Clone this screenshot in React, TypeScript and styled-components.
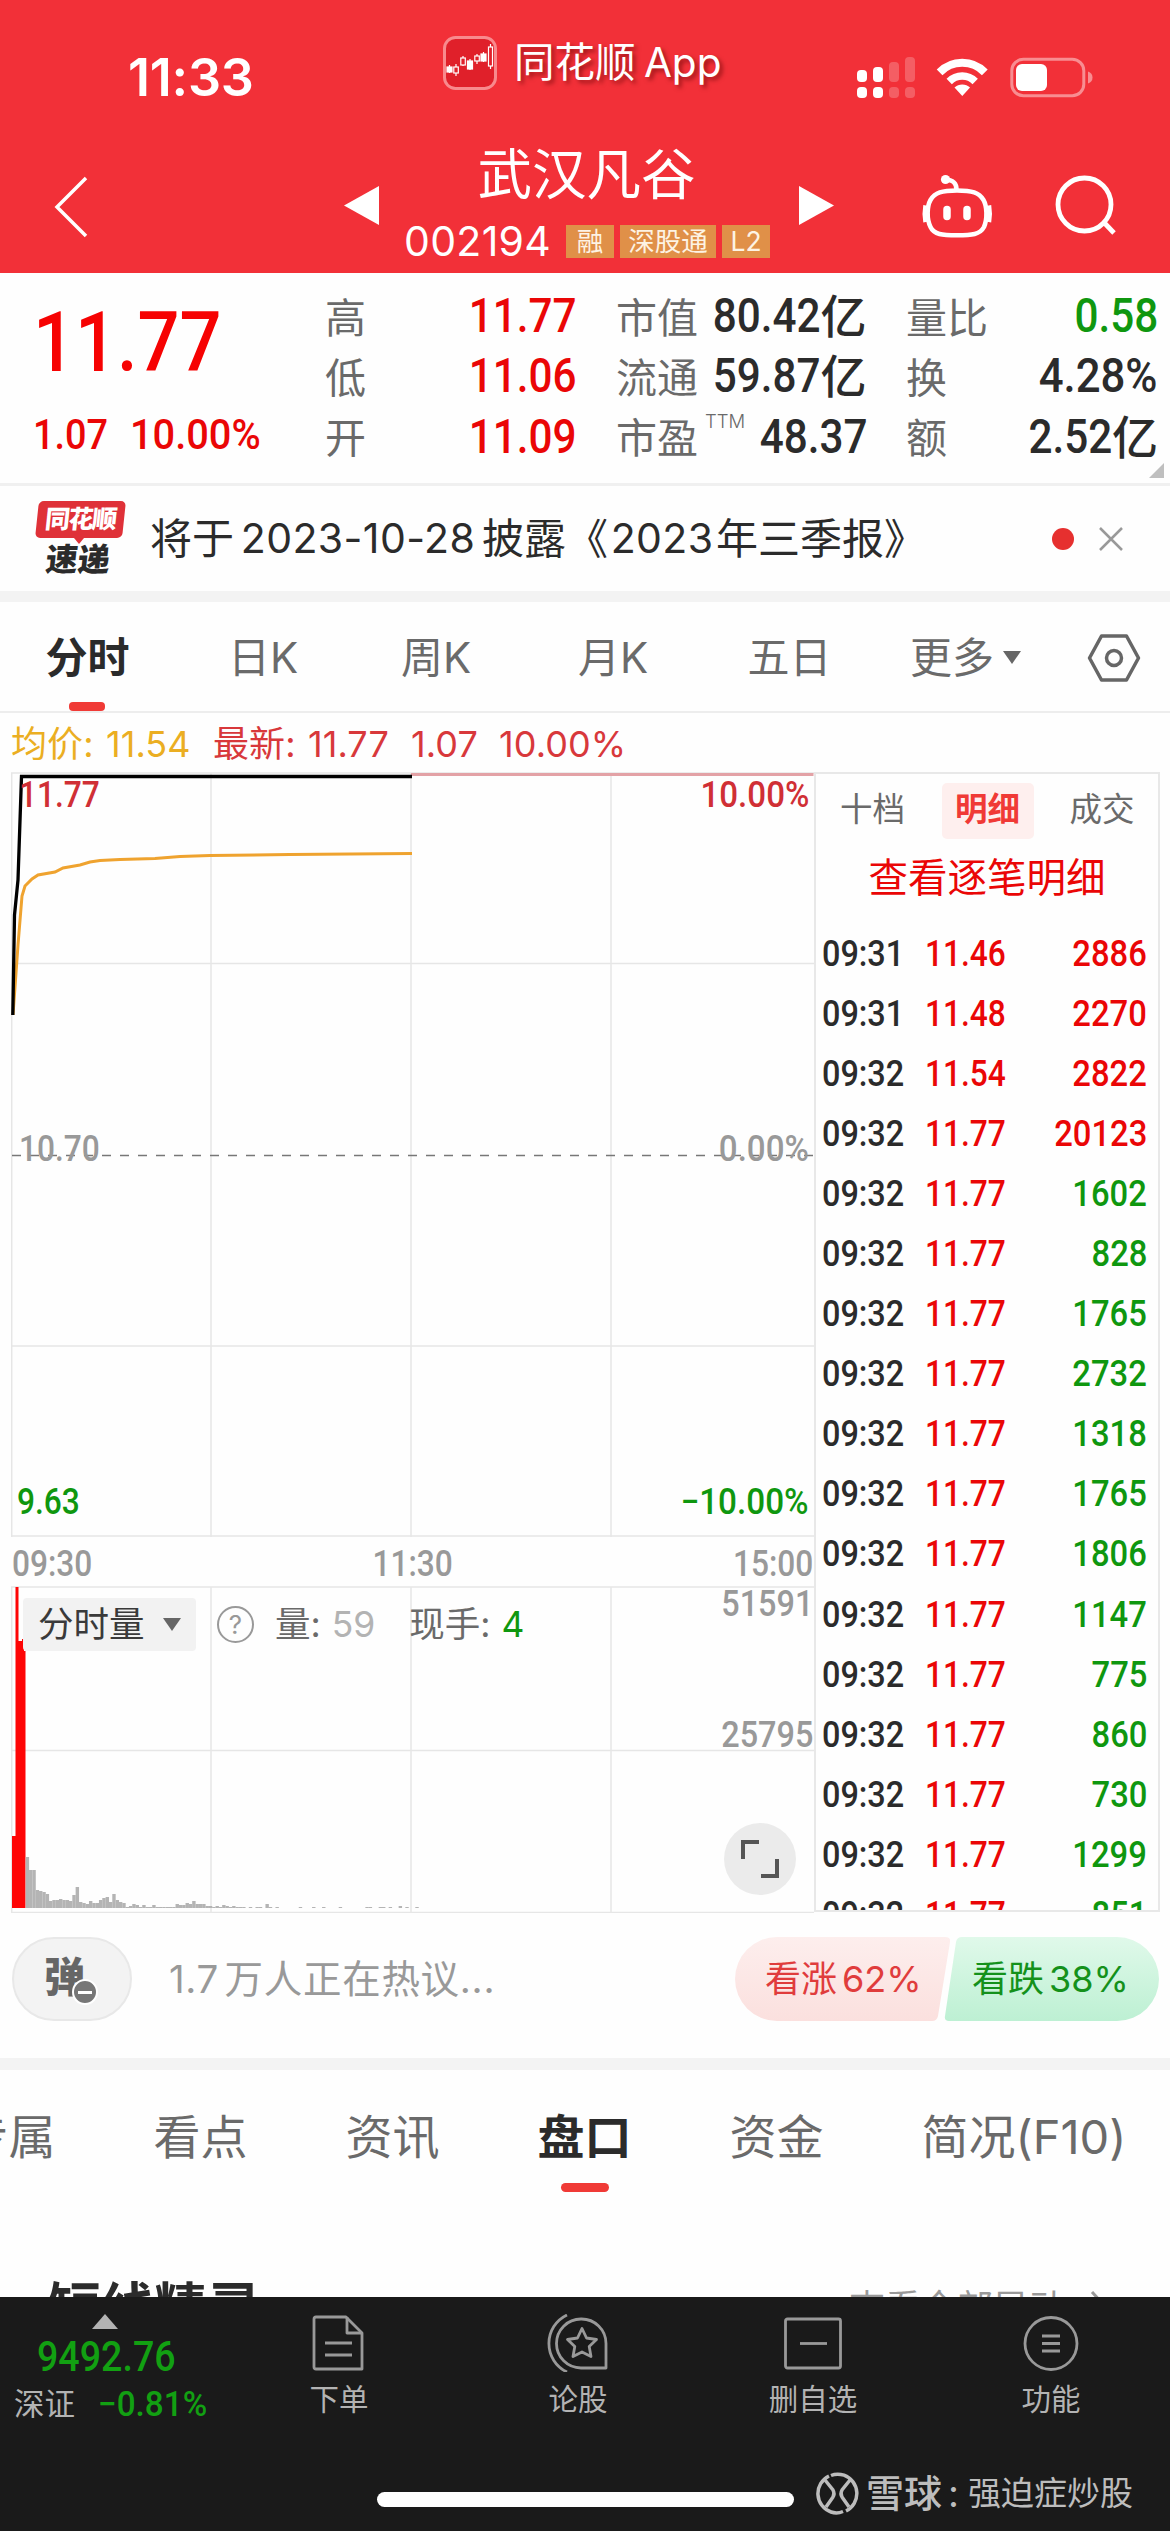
import React from "react";
import styled, { createGlobalStyle, css } from "styled-components";

const sans = `Inter, "Noto Sans CJK SC", sans-serif`;
const din = `Roboto, "Noto Sans CJK SC", sans-serif`;

const color = {
  header: "#f23038",
  rise: "#ea0606",
  fall: "#0f970f",
  ink: "#2b2b2b",
  label: "#6a6a6a",
  axis: "#999",
  grid: "#e6e6e6",
  accent: "#f03a36",
  bar: "#1a1a1a",
};

const GlobalStyle = createGlobalStyle`
  * { box-sizing: border-box; }
  html, body { margin: 0; padding: 0; background: #fefefe; }
  svg { display: block; flex: none; }
`;

const Page = styled.div`
  width: 1170px;
  height: 2532px;
  overflow: hidden;
  display: flex;
  flex-direction: column;
  background: #fefefe;
  font-family: ${sans};
  color: ${color.ink};
  white-space: nowrap;
  line-height: 1;
`;

/* Condensed figures used for all prices */
const Figure = styled.span<{ $size: number; $color?: string; $weight?: number; $squeeze?: number; $from?: string }>`
  display: inline-block;
  font-family: ${din};
  font-size: ${(p) => p.$size}px;
  font-weight: ${(p) => p.$weight ?? 500};
  color: ${(p) => p.$color ?? color.ink};
  transform: scaleX(${(p) => p.$squeeze ?? 0.88});
  transform-origin: ${(p) => p.$from ?? "left"} center;
`;

/* ---------- header ---------- */
const Header = styled.header`
  flex: none;
  height: 273px;
  background: ${color.header};
  color: #fff;
`;

const StatusBar = styled.div`
  height: 126px;
  display: grid;
  grid-template-columns: 443px 411px 1fr;
  align-items: start;
`;

const Clock = styled.div`
  padding: 52px 0 0 128px;
  font-size: 52px;
  font-weight: 600;
  letter-spacing: -0.2px;
`;

const AppBadge = styled.div`
  padding-top: 36px;
  display: flex;
  align-items: center;
  gap: 17px;
  font-size: 40.5px;
  font-weight: 400;
  letter-spacing: 0;
  word-spacing: -3px;
  text-shadow: 3px 3px 4px rgba(90, 0, 0, 0.55);
`;

const StatusIcons = styled.div`
  padding-top: 54px;
  display: flex;
`;

const TitleBar = styled.div`
  height: 147px;
  display: grid;
  grid-template-columns: 340px 42px 413px 42px 84px 72px 62px 1fr;
  align-items: center;
`;

const BackSlot = styled.div`
  padding: 14px 0 0 54px;
`;

const ArrowSlot = styled.div`
  padding-top: 11px;
  justify-self: center;
`;

const IconSlot = styled.div<{ $col: number }>`
  padding-top: 12px;
  grid-column: ${(p) => p.$col};
`;

const TitleStack = styled.div`
  height: 147px;
  padding: 19px 4px 0 0;
  display: flex;
  flex-direction: column;
  align-items: center;
`;

const StockName = styled.div`
  font-size: 54.5px;
  font-weight: 400;
  line-height: 58px;
`;

const CodeRow = styled.div`
  width: 100%;
  padding-left: 22px;
  margin-top: 18px;
  height: 40px;
  display: flex;
  align-items: center;
  gap: 6px;
`;

const Code = styled.span`
  width: 156px;
  font-size: 41px;
  font-weight: 400;
  letter-spacing: 0.3px;
`;

const Tag = styled.span<{ $w: number }>`
  width: ${(p) => p.$w}px;
  height: 33px;
  display: grid;
  place-items: center;
  background: #e09048;
  color: #fdf3e4;
  font-size: 26.5px;
`;

/* ---------- quote ---------- */
const Quote = styled.section`
  flex: none;
  height: 213px;
  padding-top: 13px;
  border-bottom: 3px solid #f0f0f0;
  display: grid;
  grid-template-columns: 325px 251px 40px 250px 40px 252px 12px;
  position: relative;
`;

const PriceBlock = styled.div`
  padding-left: 33px;
`;

const PriceMain = styled.div`
  height: 114px;
  display: flex;
  align-items: center;
`;

const PriceChange = styled.div`
  height: 68px;
  display: grid;
  grid-template-columns: 97px 1fr;
  align-items: center;
`;

const StatColumn = styled.div<{ $col: number }>`
  grid-column: ${(p) => p.$col};
`;

const Stat = styled.div`
  height: 60.3px;
  display: flex;
  align-items: center;
`;

const StatLabel = styled.span`
  padding-top: 4px;
  font-size: 41px;
  color: ${color.label};
  font-weight: 400;
`;

const StatSup = styled.sup`
  align-self: flex-start;
  margin: 5px 0 0 7px;
  font-size: 18.5px;
  color: ${color.label};
  font-weight: 300;
`;

const StatValue = styled.span`
  margin-left: auto;
  display: flex;
  align-items: center;
`;

const Unit = styled.span`
  font-size: 46px;
  font-weight: 500;
  font-family: ${sans};
`;

const FoldCorner = styled.i`
  position: absolute;
  right: 6px;
  bottom: 5px;
  border-style: solid;
  border-width: 0 0 15px 15px;
  border-color: transparent transparent #bfbfbf transparent;
`;

/* ---------- news ---------- */
const News = styled.section`
  flex: none;
  height: 105px;
  display: flex;
  align-items: center;
`;

const NewsLogo = styled.div`
  flex: none;
  width: 150px;
  padding-left: 37px;
  display: flex;
  flex-direction: column;
`;

const LogoTop = styled.span`
  width: 87px;
  height: 37px;
  display: grid;
  place-items: center;
  border-radius: 5px;
  background: #df3138;
  color: #fff;
  transform: skewX(-6deg);
  font-size: 25px;
  font-weight: 900;
  letter-spacing: -1.5px;
`;

const LogoTail = styled.i`
  margin-left: 37px;
  border-style: solid;
  border-width: 6px 5px 0 5px;
  border-color: #df3138 transparent transparent;
  width: 0;
`;

const LogoBottom = styled.span`
  padding-left: 9px;
  font-size: 32px;
  line-height: 32px;
  font-weight: 900;
  transform: skewX(-6deg);
`;

const NewsText = styled.div`
  flex: none;
  width: 865px;
  display: flex;
  align-items: center;
  font-size: 42px;
`;

const NewsNumber = styled.span<{ $w: number }>`
  width: ${(p) => p.$w}px;
  text-align: center;
  font-size: 41px;
  letter-spacing: 0.4px;
`;

const RedDot = styled.i`
  margin: 0 25px 0 37px;
  width: 22px;
  height: 22px;
  border-radius: 50%;
  background: #e6302f;
`;

const Band = styled.div<{ $h: number }>`
  flex: none;
  height: ${(p) => p.$h}px;
  background: #f3f3f3;
`;

/* ---------- period tabs ---------- */
const PeriodTabs = styled.nav`
  flex: none;
  height: 111px;
  border-bottom: 2px solid #ededed;
  display: grid;
  grid-template-columns: 175px 176px 170px 184px 169px 183px 1fr;
`;

const PeriodTab = styled.div<{ $active?: boolean }>`
  display: flex;
  align-items: center;
  justify-content: center;
  padding-top: 2px;
  gap: 9px;
  font-size: 42px;
  color: ${(p) => (p.$active ? color.ink : color.label)};
  font-weight: ${(p) => (p.$active ? 700 : 400)};
  position: relative;
  ${(p) =>
    p.$active &&
    css`
      &::after {
        content: "";
        position: absolute;
        left: 69px;
        bottom: 0;
        width: 36px;
        height: 9px;
        border-radius: 4px;
        background: ${color.accent};
      }
    `}
`;

const Legend = styled.div`
  flex: none;
  height: 59px;
  padding: 2px 0 0 11px;
  display: grid;
  grid-template-columns: 202px 198px 88px 1fr;
  align-items: center;
  font-size: 36px;
  letter-spacing: 0.1px;
  word-spacing: 2px;
  color: #d8383b;
`;

const Average = styled.span`
  color: #ebae22;
`;

/* ---------- charts ---------- */
const Workspace = styled.div`
  flex: none;
  height: 1140px;
  padding-left: 11px;
  display: flex;
`;

const ChartColumn = styled.div`
  width: 803px;
  display: flex;
  flex-direction: column;
`;

const PlotArea = styled.div<{ $h: number }>`
  position: relative;
  height: ${(p) => p.$h}px;
`;

const AxisLabel = styled.span<{ $top: number; $side: "left" | "right"; $inset: number }>`
  position: absolute;
  top: ${(p) => p.$top}px;
  ${(p) => p.$side}: ${(p) => p.$inset}px;
`;

const TimeAxis = styled.div`
  height: 49px;
  padding: 4px 1px 0 1px;
  display: grid;
  grid-template-columns: 1fr 1fr 1fr;
  align-items: center;
  & > :nth-child(2) { justify-self: center; }
  & > :nth-child(3) { justify-self: end; }
`;

const VolumeTools = styled.div`
  position: absolute;
  left: 12px;
  top: 12px;
  height: 53px;
  display: flex;
  align-items: center;
  font-size: 35.5px;
  color: ${color.label};
`;

const VolumePicker = styled.div`
  width: 173px;
  height: 53px;
  padding-left: 15px;
  border-radius: 4px;
  background: #f2f2f2;
  display: flex;
  align-items: center;
  gap: 18px;
  color: #3a3a3a;
`;

const HelpIcon = styled.span`
  margin: 0 21px 0 21px;
  width: 37px;
  height: 37px;
  border: 2.5px solid #999;
  border-radius: 50%;
  display: grid;
  place-items: center;
  font-size: 26px;
  color: #999;
`;

const ToolValue = styled.span<{ $color: string; $gap: number }>`
  margin: 0 ${(p) => p.$gap}px 0 11px;
  color: ${(p) => p.$color};
`;

const ExpandButton = styled.div`
  position: absolute;
  left: 713px;
  top: 237px;
  width: 72px;
  height: 72px;
  border-radius: 50%;
  background: #ebebeb;
  display: grid;
  place-items: center;
`;

/* ---------- tick panel ---------- */
const TickPanel = styled.aside`
  width: 346px;
  height: 1140px;
  overflow: hidden;
  border: 2px solid #e8e8e8;
`;

const TickTabs = styled.div`
  height: 73px;
  padding-left: 10px;
  display: grid;
  grid-template-columns: 93px 137px 92px;
  align-items: center;
  justify-items: center;
`;

const TickTab = styled.span<{ $active?: boolean }>`
  width: 92px;
  height: 56px;
  display: grid;
  place-items: center;
  border-radius: 5px;
  font-size: 32.5px;
  color: ${(p) => (p.$active ? color.accent : color.label)};
  font-weight: ${(p) => (p.$active ? 700 : 400)};
  background: ${(p) => (p.$active ? "#feefee" : "transparent")};
`;

const TickLink = styled.div`
  height: 77px;
  padding-top: 12px;
  text-align: center;
  font-size: 39.5px;
  color: ${color.rise};
`;

const TickRow = styled.div`
  height: 60.05px;
  padding: 0 11px 0 6px;
  display: grid;
  grid-template-columns: 103px 100px 1fr;
  align-items: center;
  & > :last-child { justify-self: end; }
`;

/* ---------- discussion ---------- */
const Discussion = styled.section`
  flex: none;
  height: 146px;
  padding: 25px 11px 0 12px;
  display: flex;
  align-items: flex-start;
`;

const BulletButton = styled.div`
  width: 120px;
  height: 84px;
  padding: 0 0 3px 30px;
  border: 2px solid #e8e8e8;
  border-radius: 42px;
  background: #f3f3f3;
  display: flex;
  align-items: center;
  font-size: 41px;
  font-weight: 900;
  color: #666;
  position: relative;
`;

const MinusBadge = styled.i`
  position: absolute;
  left: 58px;
  top: 40px;
  width: 26px;
  height: 26px;
  border: 2px solid #fff;
  border-radius: 50%;
  background: #777;
  display: grid;
  place-items: center;
  &::after {
    content: "";
    width: 14px;
    height: 3px;
    background: #fff;
  }
`;

const HotText = styled.div`
  flex: 1;
  padding-left: 37px;
  line-height: 84px;
  font-size: 38.5px;
  letter-spacing: 0.7px;
  word-spacing: -6px;
  color: #999;
`;

const Vote = styled.div<{ $up?: boolean }>`
  height: 84px;
  display: flex;
  align-items: center;
  font-size: 36px;
  gap: 5px;
  ${(p) =>
    p.$up
      ? css`
          width: 215px;
          padding-left: 30px;
          color: #e03c3c;
          background: linear-gradient(#fdeeed, #fbe0de);
          clip-path: path("M42 0H210Q216 0 215 5L203 79Q202 84 197 84H42A42 42 0 0 1 42 0Z");
        `
      : css`
          width: 215px;
          margin-left: -6px;
          padding-left: 28px;
          color: #14911b;
          background: linear-gradient(#e0f9ea, #bdf0d3);
          clip-path: path("M18 0H173A42 42 0 0 1 173 84H5Q0 84 1 79L12 5Q13 0 18 0Z");
        `}
`;

/* ---------- section tabs ---------- */
const SectionTabs = styled.nav`
  flex: none;
  height: 160px;
  display: flex;
  gap: 98px;
  margin-left: -38.5px;
  padding-top: 41px;
`;

const SectionTab = styled.div<{ $active?: boolean }>`
  display: flex;
  flex-direction: column;
  align-items: center;
  font-size: 47px;
  line-height: 52px;
  color: ${(p) => (p.$active ? color.ink : color.label)};
  font-weight: ${(p) => (p.$active ? 700 : 400)};
  &::after {
    content: "";
    margin-top: 20px;
    width: 48px;
    height: 9px;
    border-radius: 5px;
    background: ${(p) => (p.$active ? color.accent : "transparent")};
  }
`;

const SectionHead = styled.div`
  flex: none;
  height: 67px;
  padding: 52px 64px 0 48px;
  overflow: hidden;
  display: flex;
  justify-content: space-between;
`;

const SectionTitle = styled.span`
  font-size: 53px;
  font-weight: 700;
`;

const SectionMore = styled.span`
  padding-top: 8px;
  display: flex;
  gap: 25px;
  font-size: 36px;
  color: ${color.axis};
`;

/* ---------- bottom bar ---------- */
const BottomBar = styled.footer`
  flex: none;
  height: 234px;
  background: ${color.bar};
  color: #b3b3b3;
`;

const Actions = styled.div`
  height: 150px;
  display: grid;
  grid-template-columns: 216px 246px 232px 238px 1fr;
`;

const IndexBlock = styled.div`
  padding: 16px 0 0 14px;
  display: flex;
  flex-direction: column;
`;

const IndexRow = styled.div<{ $h: number; $indent?: number }>`
  height: ${(p) => p.$h}px;
  padding-left: ${(p) => p.$indent ?? 0}px;
  display: flex;
  align-items: center;
  gap: 23px;
  font-size: 30.5px;
`;

const Action = styled.div`
  padding-top: 17px;
  display: flex;
  flex-direction: column;
  align-items: center;
  gap: 10px;
  font-size: 29.5px;
  line-height: 34px;
`;

const HomeRow = styled.div`
  height: 84px;
  padding-left: 377px;
  display: flex;
`;

const HomeIndicator = styled.div`
  margin: 45px 22px 0 0;
  width: 417px;
  height: 15px;
  border-radius: 8px;
  background: #fff;
`;

const Watermark = styled.div`
  padding-top: 24px;
  height: 68px;
  display: flex;
  align-items: center;
  font-size: 38px;
  color: #bdbdbd;
`;

const Author = styled.span`
  margin-left: 9px;
  font-size: 33px;
`;

const Brand = styled.span`
  margin: 0 6px 0 7px;
  font-weight: 500;
`;

/* ---------- data ---------- */
const ticks: [string, string, string, boolean][] = [
  ["09:31", "11.46", "2886", true],
  ["09:31", "11.48", "2270", true],
  ["09:32", "11.54", "2822", true],
  ["09:32", "11.77", "20123", true],
  ["09:32", "11.77", "1602", false],
  ["09:32", "11.77", "828", false],
  ["09:32", "11.77", "1765", false],
  ["09:32", "11.77", "2732", false],
  ["09:32", "11.77", "1318", false],
  ["09:32", "11.77", "1765", false],
  ["09:32", "11.77", "1806", false],
  ["09:32", "11.77", "1147", false],
  ["09:32", "11.77", "775", false],
  ["09:32", "11.77", "860", false],
  ["09:32", "11.77", "730", false],
  ["09:32", "11.77", "1299", false],
  ["09:32", "11.77", "851", false],
];

const volumeTail = [
  51, 38, 38, 18, 17, 16, 14, 7, 8, 8, 9, 8, 8, 7, 13, 21, 6, 5, 4, 7, 5, 5, 8, 10, 11, 6, 14, 8, 6, 5,
  1, 2, 4, 3, 1, 3, 1, 1, 3, 1, 1, 1, 1, 1, 1, 4, 3, 3, 5, 4, 7, 4, 4, 4, 2, 2, 1, 2, 1, 3, 2, 1, 2, 1, 1,
  1, 0, 1, 0, 1, 1, 0, 4, 1, 0, 1, 0, 0, 0, 0, 0, 0, 1, 0, 0, 0, 1, 0, 0, 1, 0, 0, 0, 0, 1, 0, 0, 0, 0, 0,
  0, 0, 1, 1, 0, 0, 1, 1, 0, 1, 0, 0, 2, 0, 1, 0, 0, 1,
];

const Triangle = ({ w, h, d, fill }: { w: number; h: number; d: string; fill: string }) => (
  <svg width={w} height={h} viewBox={`0 0 ${w} ${h}`}>
    <path d={d} fill={fill} />
  </svg>
);

const SignalIcon = () => (
  <svg width="242" height="48" viewBox="853 54 242 48" fill="#fff">
    {[70, 67, 62, 57].map((top, i) => (
      <g key={top} opacity={i < 2 ? 1 : 0.22}>
        <rect x={856 + i * 16} y={top} width="10" height={82 - top} rx="4" />
        <rect x={856 + i * 16} y="87" width="10" height="11" rx="4" />
      </g>
    ))}
    <g fill="none" stroke="#fff">
      <path d="M938.6 72.4A31.5 31.5 0 0 1 983.8 72.4" strokeWidth="8" />
      <path d="M948.2 81.5A18.3 18.3 0 0 1 974.2 81.5" strokeWidth="7.5" />
    </g>
    <path d="M961.3 96L953.5 87.6A11 11 0 0 1 969 87.6Z" />
    <rect x="1010.8" y="59.3" width="72" height="36.5" rx="11.5" fill="none" stroke="#fff" strokeWidth="3" opacity=".45" />
    <rect x="1015" y="64" width="31" height="27" rx="6" />
    <path d="M1087 71.5Q1091.5 73 1091.5 77.500T1087 83.500Z" opacity=".45" />
  </svg>
);

const AppIcon = () => (
  <svg width="54" height="54" viewBox="0 0 54 54">
    <rect x="1.500" y="1.500" width="51" height="51" rx="11" fill="#e0202a" stroke="#f88a8d" strokeWidth="3" />
    <g stroke="#fff" strokeWidth="1.200">
      <path d="M6.500 29V37M13 28V40M20 20V30M27 23V34M34 18V28M40.500 16V26M47.500 8V33" />
      <g fill="#fff">
        <rect x="4" y="31" width="5" height="5" />
        <rect x="24.500" y="25" width="5" height="8" />
        <rect x="38" y="18" width="5" height="7" />
      </g>
      <g fill="#e0202a">
        <rect x="10.800" y="31" width="4.500" height="6" />
        <rect x="17.800" y="22" width="4.500" height="7" />
        <rect x="31.800" y="20" width="4.500" height="5" />
        <rect x="45.500" y="11" width="4" height="19" />
      </g>
    </g>
  </svg>
);

const RobotIcon = () => (
  <svg width="72" height="66" viewBox="921 172 72 66" fill="none" stroke="#fff" strokeWidth="4.500">
    <path d="M957 189.500C972 189.500 979 191.500 983.500 199C987 205 987.500 218 984 226C980 233.500 972 234.300 957 234.300S934 233.500 930.500 226C926.500 218 927 205 930.500 199C935 191.500 942 189.500 957 189.500Z" />
    <path d="M945 178.500Q957 179 956.500 189" />
    <circle cx="945.500" cy="178.500" r="4.600" fill="#fff" stroke="none" />
    <path d="M926 204.500Q924.500 213 926 221M988.500 204.500Q990 213 988.500 221" strokeWidth="5.500" />
    <path d="M947 208.500V215.500M967 208.500V215.500" strokeWidth="7.500" strokeLinecap="round" />
  </svg>
);

const SearchIcon = () => (
  <svg width="62" height="62" viewBox="1055 175 62 62" fill="none" stroke="#fff" strokeWidth="4.800">
    <circle cx="1084.500" cy="204.500" r="26.500" />
    <path d="M1103.500 222L1114 233" />
  </svg>
);

const PriceChart = () => (
  <svg width="805" height="765" viewBox="11 772 805 765">
    <g stroke={color.grid} strokeWidth="1.500">
      <path d="M11.700 773V1537M211 773V1537M411 773V1537M611 773V1537" />
      <path d="M11 773H814M11 963.500H814M11 1346H814M11 1536H814" />
    </g>
    <path d="M12 1155.500H814" stroke="#777" strokeWidth="1.600" strokeDasharray="9 9" />
    <path d="M411 774.500H813.500" fill="none" stroke="#e3a2a6" strokeWidth="3" />
    <path
      d="M13 1015L18 945L22 896L25 886L32 879L38 875L55 872L63 868L80 865L90 862L100 860.500L120 859.500L155 858.500L180 856.500L210 855.500L290 854.500L412 853.500"
      fill="none"
      stroke="#efa32f"
      strokeWidth="3"
    />
    <path d="M12.800 1015L14.500 915L18 880L21.500 776.500H412" fill="none" stroke="#000" strokeWidth="3.300" />
  </svg>
);

const VolumeChart = () => (
  <svg width="805" height="327" viewBox="11 1585 805 327">
    <g stroke={color.grid} strokeWidth="1.500">
      <path d="M11.700 1586V1912M211 1586V1912M411 1586V1912M611 1586V1912" />
      <path d="M11 1586H814M11 1749.500H814M11 1911.500H814" />
    </g>
    <path d="M12 1907V1835H15.500V1586H18.500V1640H22V1638H24V1650H25.500V1907Z" fill="#fe0505" />
    {volumeTail.map((h, i) => (
      <rect key={i} x={25.7 + i * 3.33} y={1907 - h} width="3.400" height={h} fill="#b4b4b4" />
    ))}
  </svg>
);

export default function App() {
  return (
    <Page>
      <GlobalStyle />
      <Header>
        <StatusBar>
          <Clock>11:33</Clock>
          <AppBadge>
            <AppIcon />
            同花顺 App
          </AppBadge>
          <StatusIcons>
            <SignalIcon />
          </StatusIcons>
        </StatusBar>
        <TitleBar>
          <BackSlot>
            <svg width="34" height="62" viewBox="0 0 34 62" fill="none" stroke="#fff" strokeWidth="3.500">
              <path d="M32 2L3 31L32 60" />
            </svg>
          </BackSlot>
          <ArrowSlot>
            <Triangle w={35} h={39} d="M35 0V39L0 19.500Z" fill="#fff" />
          </ArrowSlot>
          <TitleStack>
            <StockName>武汉凡谷</StockName>
            <CodeRow>
              <Code>002194</Code>
              <Tag $w={48}>融</Tag>
              <Tag $w={96}>深股通</Tag>
              <Tag $w={48}>L2</Tag>
            </CodeRow>
          </TitleStack>
          <ArrowSlot>
            <Triangle w={35} h={39} d="M0 0V39L35 19.500Z" fill="#fff" />
          </ArrowSlot>
          <IconSlot $col={6}>
            <RobotIcon />
          </IconSlot>
          <IconSlot $col={8}>
            <SearchIcon />
          </IconSlot>
        </TitleBar>
      </Header>

      <Quote>
        <PriceBlock>
          <PriceMain>
            <Figure $size={84} $color="#f60202" $squeeze={0.88}>11.77</Figure>
          </PriceMain>
          <PriceChange>
            <Figure $size={43} $color={color.rise}>1.07</Figure>
            <Figure $size={43} $color={color.rise} $squeeze={0.925}>10.00%</Figure>
          </PriceChange>
        </PriceBlock>
        <StatColumn $col={2}>
          {[["高", "11.77"], ["低", "11.06"], ["开", "11.09"]].map(([k, v]) => (
            <Stat key={k}>
              <StatLabel>{k}</StatLabel>
              <StatValue>
                <Figure $size={48} $color={color.rise} $from="right">{v}</Figure>
              </StatValue>
            </Stat>
          ))}
        </StatColumn>
        <StatColumn $col={4}>
          <Stat>
            <StatLabel>市值</StatLabel>
            <StatValue>
              <Figure $size={48} $from="right">80.42</Figure>
              <Unit>亿</Unit>
            </StatValue>
          </Stat>
          <Stat>
            <StatLabel>流通</StatLabel>
            <StatValue>
              <Figure $size={48} $from="right">59.87</Figure>
              <Unit>亿</Unit>
            </StatValue>
          </Stat>
          <Stat>
            <StatLabel>市盈</StatLabel>
            <StatSup>TTM</StatSup>
            <StatValue>
              <Figure $size={48} $from="right">48.37</Figure>
            </StatValue>
          </Stat>
        </StatColumn>
        <StatColumn $col={6}>
          <Stat>
            <StatLabel>量比</StatLabel>
            <StatValue>
              <Figure $size={48} $from="right" $color={color.fall}>0.58</Figure>
            </StatValue>
          </Stat>
          <Stat>
            <StatLabel>换</StatLabel>
            <StatValue>
              <Figure $size={48} $from="right" $squeeze={0.91}>4.28%</Figure>
            </StatValue>
          </Stat>
          <Stat>
            <StatLabel>额</StatLabel>
            <StatValue>
              <Figure $size={48} $from="right">2.52</Figure>
              <Unit>亿</Unit>
            </StatValue>
          </Stat>
        </StatColumn>
        <FoldCorner />
      </Quote>

      <News>
        <NewsLogo>
          <LogoTop>同花顺</LogoTop>
          <LogoTail />
          <LogoBottom>速递</LogoBottom>
        </NewsLogo>
        <NewsText>
          将于
          <NewsNumber $w={248}>2023-10-28</NewsNumber>
          披露《
          <NewsNumber $w={108}>2023</NewsNumber>
          年三季报》
        </NewsText>
        <RedDot />
        <svg width="24" height="24" viewBox="0 0 24 24" stroke="#999" strokeWidth="2.500">
          <path d="M1 1L23 23M23 1L1 23" />
        </svg>
      </News>
      <Band $h={11} />

      <PeriodTabs>
        <PeriodTab $active>分时</PeriodTab>
        <PeriodTab>日K</PeriodTab>
        <PeriodTab>周K</PeriodTab>
        <PeriodTab>月K</PeriodTab>
        <PeriodTab>五日</PeriodTab>
        <PeriodTab>
          更多
          <Triangle w={18} h={13} d="M0 0H18L9 13Z" fill="#666" />
        </PeriodTab>
        <PeriodTab>
          <svg width="54" height="48" viewBox="0 0 54 48" fill="none" stroke="#666" strokeWidth="3.500">
            <path d="M14.500 2H39.500L51.500 24L39.500 46H14.500L2.500 24Z" strokeLinejoin="round" />
            <circle cx="27" cy="24" r="7.500" />
          </svg>
        </PeriodTab>
      </PeriodTabs>

      <Legend>
        <Average>均价: 11.54</Average>
        <span>最新: 11.77</span>
        <span>1.07</span>
        <span>10.00%</span>
      </Legend>

      <Workspace>
        <ChartColumn>
          <PlotArea $h={765}>
            <PriceChart />
            <AxisLabel $side="left" $inset={8} $top={5}>
              <Figure $size={36} $color="#d02f35">11.77</Figure>
            </AxisLabel>
            <AxisLabel $side="right" $inset={5} $top={5}>
              <Figure $size={36} $color="#d02f35" $from="right" $squeeze={0.92}>10.00%</Figure>
            </AxisLabel>
            <AxisLabel $side="left" $inset={8} $top={359}>
              <Figure $size={36} $color={color.axis}>10.70</Figure>
            </AxisLabel>
            <AxisLabel $side="right" $inset={5} $top={359}>
              <Figure $size={36} $color={color.axis} $from="right" $squeeze={0.92}>0.00%</Figure>
            </AxisLabel>
            <AxisLabel $side="left" $inset={6} $top={712}>
              <Figure $size={36} $color={color.fall}>9.63</Figure>
            </AxisLabel>
            <AxisLabel $side="right" $inset={5} $top={712}>
              <Figure $size={36} $color={color.fall} $from="right" $squeeze={0.925}>−10.00%</Figure>
            </AxisLabel>
          </PlotArea>
          <TimeAxis>
            <Figure $size={36} $color={color.axis}>09:30</Figure>
            <Figure $size={36} $color={color.axis} $from="center">11:30</Figure>
            <Figure $size={36} $color={color.axis} $from="right">15:00</Figure>
          </TimeAxis>
          <PlotArea $h={326}>
            <VolumeChart />
            <AxisLabel $side="right" $inset={1} $top={0}>
              <Figure $size={36} $color={color.axis} $from="right" $squeeze={0.9}>51591</Figure>
            </AxisLabel>
            <AxisLabel $side="right" $inset={1} $top={131}>
              <Figure $size={36} $color={color.axis} $from="right" $squeeze={0.9}>25795</Figure>
            </AxisLabel>
            <VolumeTools>
              <VolumePicker>
                分时量
                <Triangle w={18} h={13} d="M0 0H18L9 13Z" fill="#666" />
              </VolumePicker>
              <HelpIcon>?</HelpIcon>
              量:
              <ToolValue $color="#b3b3b3" $gap={34}>59</ToolValue>
              现手:
              <ToolValue $color="#0f970f" $gap={0}>4</ToolValue>
            </VolumeTools>
            <ExpandButton>
              <svg width="38" height="38" viewBox="0 0 38 38" fill="none" stroke="#555" strokeWidth="4">
                <path d="M2 19V2H18M36 19V36H20" />
              </svg>
            </ExpandButton>
          </PlotArea>
        </ChartColumn>
        <TickPanel>
          <TickTabs>
            <TickTab>十档</TickTab>
            <TickTab $active>明细</TickTab>
            <TickTab>成交</TickTab>
          </TickTabs>
          <TickLink>查看逐笔明细</TickLink>
          {ticks.map(([time, price, vol, up], i) => (
            <TickRow key={i}>
              <Figure $size={36} $squeeze={0.9}>{time}</Figure>
              <Figure $size={36} $color={color.rise} $squeeze={0.88}>{price}</Figure>
              <Figure $size={36} $color={up ? color.rise : color.fall} $from="right" $squeeze={0.91}>{vol}</Figure>
            </TickRow>
          ))}
        </TickPanel>
      </Workspace>

      <Discussion>
        <BulletButton>
          弹
          <MinusBadge />
        </BulletButton>
        <HotText>1.7 万人正在热议...</HotText>
        <Vote $up>
          <span>看涨</span>
          <span>62%</span>
        </Vote>
        <Vote>
          <span>看跌</span>
          <span>38%</span>
        </Vote>
      </Discussion>
      <Band $h={12} />

      <SectionTabs>
        <SectionTab>专属</SectionTab>
        <SectionTab>看点</SectionTab>
        <SectionTab>资讯</SectionTab>
        <SectionTab $active>盘口</SectionTab>
        <SectionTab>资金</SectionTab>
        <SectionTab>简况(F10)</SectionTab>
      </SectionTabs>
      <SectionHead>
        <SectionTitle>短线精灵</SectionTitle>
        <SectionMore>
          查看全部异动
          <svg width="16" height="30" viewBox="0 0 16 30" fill="none" stroke="#999" strokeWidth="3">
            <path d="M2 2L14 15L2 28" />
          </svg>
        </SectionMore>
      </SectionHead>

      <BottomBar>
        <Actions>
          <IndexBlock>
            <IndexRow $h={16} $indent={78}>
              <Triangle w={26} h={15} d="M13 0L26 15H0Z" fill="#b3b3b3" />
            </IndexRow>
            <IndexRow $h={55} $indent={23}>
              <Figure $size={42} $color="#12a012" $squeeze={0.895}>9492.76</Figure>
            </IndexRow>
            <IndexRow $h={41}>
              深证
              <Figure $size={35} $color="#12a012" $squeeze={0.95}>−0.81%</Figure>
            </IndexRow>
          </IndexBlock>
          <Action>
            <svg width="54" height="58" viewBox="0 0 54 58" fill="none" stroke="#999" strokeWidth="2.800" strokeLinejoin="round">
              <path d="M4 3H34L50 19V55H4Q2 55 2 53V5Q2 3 4 3Z" />
              <path d="M35 3V19H50M13 29H40M13 41H40" />
            </svg>
            下单
          </Action>
          <Action>
            <svg width="62" height="58" viewBox="0 0 62 58" fill="none" stroke="#999" strokeWidth="2.800" strokeLinejoin="round">
              <path d="M34 5A24.500 24.500 0 1 0 34 54H59V29.500A24.500 24.500 0 0 0 34 5Z" />
              <path d="M20 1A31.500 31.500 0 0 0 20 58" />
              <path d="M35 14.500L39.500 24L49.500 25.500L42.200 32.500L44 42.500L35 38L26 42.500L27.800 32.500L20.500 25.500L30.500 24Z" />
            </svg>
            论股
          </Action>
          <Action>
            <svg width="58" height="58" viewBox="0 0 58 58" fill="none" stroke="#999" strokeWidth="2.800">
              <rect x="1.500" y="5" width="55" height="49" rx="2" />
              <path d="M16 29.500H43" />
            </svg>
            删自选
          </Action>
          <Action>
            <svg width="56" height="58" viewBox="0 0 56 58" fill="none" stroke="#999" strokeWidth="2.800">
              <circle cx="28" cy="29.500" r="26" />
              <path d="M19 22H37M19 29.500H37M19 37H37" />
            </svg>
            功能
          </Action>
        </Actions>
        <HomeRow>
          <HomeIndicator />
          <Watermark>
            <svg width="43" height="43" viewBox="0 0 43 43" fill="none" stroke="#bdbdbd" strokeWidth="3.500">
              <path d="M13 4A19.500 19.500 0 0 0 15 40Q21 42 27 39.500M30 39A19.500 19.500 0 0 0 28 3.200Q21 1 15 3.500" />
              <path d="M9 8L17 18Q19 21.500 17 25L10 35M34 8L26 18Q24 21.500 26 25L33 35" />
            </svg>
            <Brand>雪球</Brand>:
            <Author>强迫症炒股</Author>
          </Watermark>
        </HomeRow>
      </BottomBar>
    </Page>
  );
}
